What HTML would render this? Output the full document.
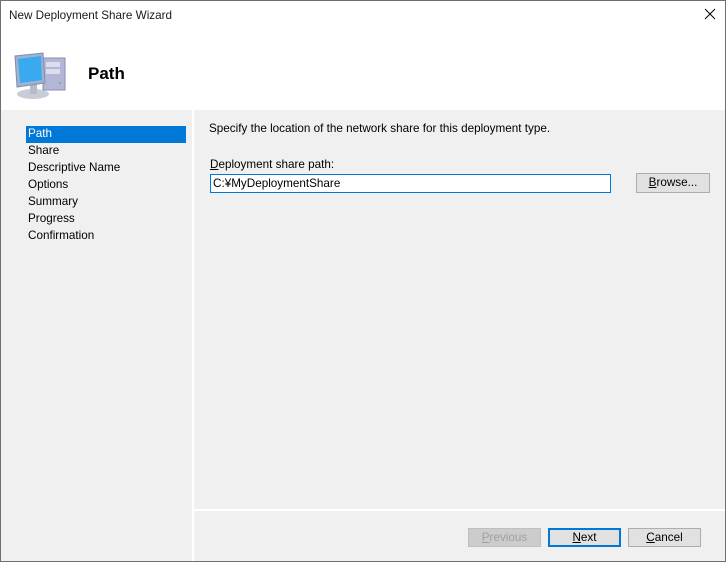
<!DOCTYPE html><html><head><style>
body{margin:0;width:726px;height:562px;overflow:hidden;font-family:"Liberation Sans",sans-serif;font-size:11.7px;color:#000}
.win{position:absolute;left:0;top:0;width:726px;height:562px;background:#f0f0f0}
.bd{position:absolute;left:0;top:0;width:724px;height:560px;border:1px solid #6f6f6f}
.hdr{position:absolute;left:0;top:0;width:726px;height:110px;background:#fff}
.t{position:absolute;left:9px;top:9px;font-size:11.7px;color:#1a1a1a}
.x{position:absolute;left:704px;top:8px}
.h{position:absolute;left:88px;top:64px;font-size:17px;font-weight:bold}
.vs{position:absolute;left:192px;top:110px;width:2px;height:452px;background:#fff}
.hs{position:absolute;left:194px;top:509px;width:532px;height:2px;background:#fff}
.nav div{position:absolute;left:26px;width:160px;height:17px;line-height:16px;padding-left:2px;box-sizing:border-box}
.sel{background:#0078d7;color:#fff}
.b{position:absolute;height:19px;border:1px solid #adadad;background:#e1e1e1;box-sizing:border-box;text-align:center;line-height:17px}
u{text-decoration:underline}
</style></head><body><div class="win">
<div class="hdr">
<div class="t">New Deployment Share Wizard</div>
<svg class="x" width="12" height="12" viewBox="0 0 12 12"><path d="M1 1L11 11M11 1L1 11" stroke="#000" stroke-width="1"/></svg>
<svg style="position:absolute;left:13px;top:50px" width="54" height="52" viewBox="0 0 54 52">
<ellipse cx="20" cy="44" rx="16" ry="5" fill="#c8ccd6"/>
<rect x="17" y="32" width="7" height="12" fill="#b8bcc8"/>
<rect x="30" y="8" width="22" height="32" fill="#b3b6d6" stroke="#8a8db0"/>
<rect x="33" y="12" width="14" height="5" fill="#dde"/>
<rect x="33" y="19" width="14" height="5" fill="#dde"/>
<circle cx="47" cy="33" r="1" fill="#4c4"/>
<polygon points="2,6 30,3 32,33 4,37" fill="#9fb2cf" stroke="#7d8fb0"/>
<polygon points="5,9 28,6 29,30 7,33" fill="#39a9f0"/>
</svg>
<div class="h">Path</div>
</div>
<div class="vs"></div><div class="hs"></div>
<div class="nav">
<div class="sel" style="top:126px">Path</div>
<div style="top:143px">Share</div>
<div style="top:160px">Descriptive Name</div>
<div style="top:177px">Options</div>
<div style="top:194px">Summary</div>
<div style="top:211px">Progress</div>
<div style="top:228px">Confirmation</div>
</div>
<div style="position:absolute;left:209px;top:122px">Specify the location of the network share for this deployment type.</div>
<div style="position:absolute;left:210px;top:158px"><u>D</u>eployment share path:</div>
<div style="position:absolute;left:210px;top:174px;width:401px;height:19px;border:1px solid #0078d7;background:#fff;box-sizing:border-box;line-height:17px;padding-left:2px">C:¥MyDeploymentShare</div>
<div class="b" style="left:636px;top:173px;width:74px;height:20px"><u>B</u>rowse...</div>
<div class="b" style="left:468px;top:528px;width:73px;height:19px;color:#a0a0a0;background:#cccccc;border-color:#bfbfbf"><u>P</u>revious</div>
<div class="b" style="left:548px;top:528px;width:73px;height:19px;border:2px solid #0078d7;line-height:15px"><u>N</u>ext</div>
<div class="b" style="left:628px;top:528px;width:73px;height:19px"><u>C</u>ancel</div>
<div class="bd"></div>
</div></body></html>
